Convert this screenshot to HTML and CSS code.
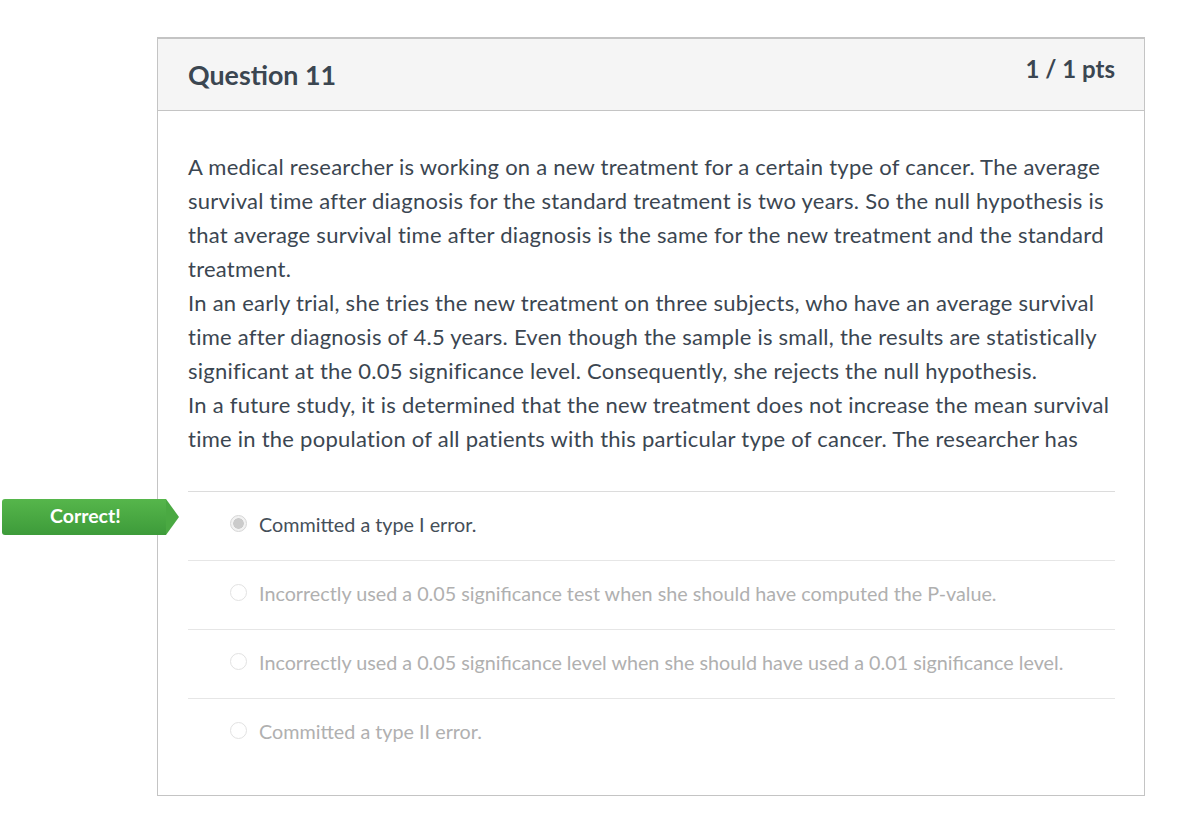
FILE: index.html
```html
<!DOCTYPE html>
<html>
<head>
<meta charset="utf-8">
<link rel="stylesheet" href="styles.css">
</head>
<body>
<div class="page">
  <div class="card">
    <div class="card-header">
      <h2 class="title">Question 11</h2>
      <div class="pts">1 / 1 pts</div>
    </div>
    <div class="card-body">
      <div class="question">
        A medical researcher is working on a new treatment for a certain type of cancer. The average survival time after diagnosis for the standard treatment is two years. So the null hypothesis is that average survival time after diagnosis is the same for the new treatment and the standard treatment.<br>
        In an early trial, she tries the new treatment on three subjects, who have an average survival time after diagnosis of 4.5 years. Even though the sample is small, the results are statistically significant at the 0.05 significance level. Consequently, she rejects the null hypothesis.<br>
        In a future study, it is determined that the new treatment does not increase the mean survival time in the population of all patients with this particular type of cancer. The researcher has
      </div>
      <div class="answers">
        <div class="answer selected">
          <div class="badge">Correct!</div>
          <span class="radio checked"></span>
          <span class="label">Committed a type I error.</span>
        </div>
        <div class="answer">
          <span class="radio"></span>
          <span class="label">Incorrectly used a 0.05 significance test when she should have computed the P-value.</span>
        </div>
        <div class="answer">
          <span class="radio"></span>
          <span class="label">Incorrectly used a 0.05 significance level when she should have used a 0.01 significance level.</span>
        </div>
        <div class="answer">
          <span class="radio"></span>
          <span class="label">Committed a type II error.</span>
        </div>
      </div>
    </div>
  </div>
</div>
</body>
</html>
```
FILE: styles.css
```css
html, body {
  margin: 0;
  padding: 0;
  background: #ffffff;
}
body {
  font-family: Lato, "Open Sans", "Liberation Sans", sans-serif;
  color: #3b4651;
}
.page {
  padding: 37px 55px 0 157px;
}
.card {
  width: 986px;
  border: 1px solid #c4c4c4;
  border-top-width: 2px;
  box-sizing: content-box;
}
.card-header {
  background: #f5f5f5;
  border-bottom: 1px solid #c4c4c4;
  height: 71px;
  display: flex;
  justify-content: space-between;
  padding: 0 29px 0 30px;
}
.title {
  margin: 0;
  font-size: 26.8px;
  font-weight: 700;
  line-height: 26px;
  padding-top: 23px;
  color: #3b4651;
}
.pts {
  font-size: 24px;
  font-weight: 700;
  line-height: 22px;
  padding-top: 19px;
  color: #3b4651;
}
.card-body {
  padding: 39px 29px 28px 30px;
}
.question {
  font-size: 22px;
  letter-spacing: 0.25px;
  line-height: 34px;
  color: #3b4651;
  padding-bottom: 35px;
}
.answers {
  border-top: 1px solid #dcdcdc;
}
.answer {
  position: relative;
  display: flex;
  align-items: center;
  height: 68px;
  box-sizing: content-box;
  border-bottom: 1px solid #e6e6e6;
  padding-left: 42px;
  font-size: 19.75px;
  color: #b0b0b0;
}
.answer .label {
  position: relative;
  top: -2px;
}
.answer .radio {
  position: relative;
  top: -3px;
}
.answer:last-child {
  border-bottom: none;
}
.answer.selected {
  color: #454f59;
}
.radio {
  width: 17px;
  height: 17px;
  border-radius: 50%;
  border: 1px solid #e2e2e2;
  box-sizing: border-box;
  margin-right: 12px;
  background: #fff;
  flex: none;
}
.radio.checked {
  border: 1px solid #d6d6d6;
  background: radial-gradient(circle, #cbcbcb 0 5px, #f2f2f2 5.6px);
}
.badge {
  position: absolute;
  left: -186px;
  top: 7px;
  width: 164px;
  height: 36px;
  box-sizing: border-box;
  background: linear-gradient(#56b64b, #3d9b3a);
  color: #fff;
  font-weight: 700;
  font-size: 19.5px;
  line-height: 34px;
  padding-left: 48px;
  border-radius: 3px 0 0 3px;
}
.badge::after {
  content: "";
  position: absolute;
  right: -13px;
  top: 0;
  border-top: 18px solid transparent;
  border-bottom: 18px solid transparent;
  border-left: 13px solid #4aa942;
}
```
